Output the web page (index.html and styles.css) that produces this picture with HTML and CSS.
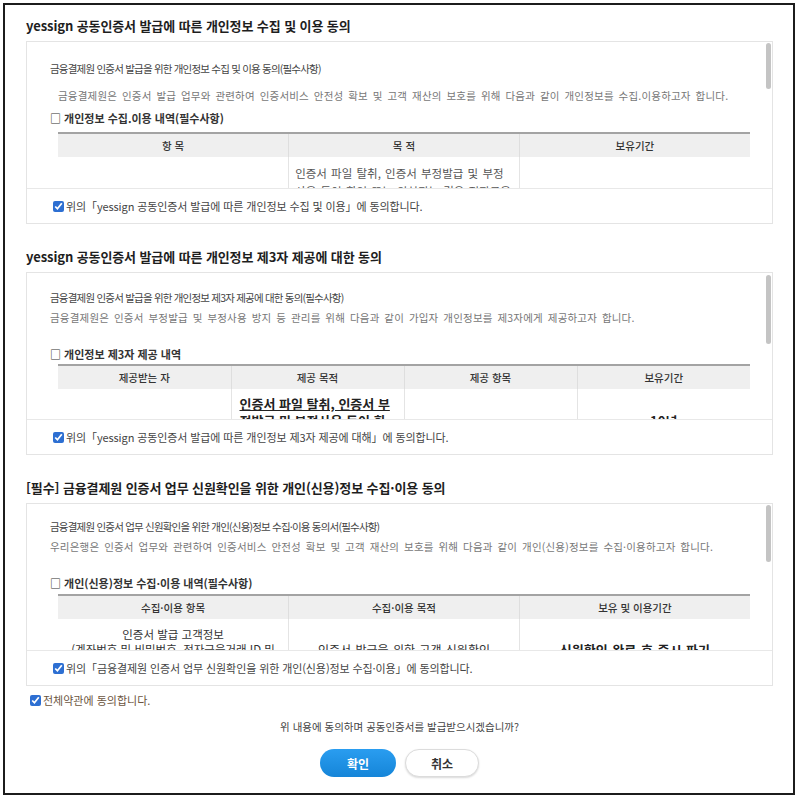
FILE: index.html
```html
<!DOCTYPE html>
<html lang="ko">
<head>
<meta charset="utf-8">
<title>공동인증서 발급 약관 동의</title>
<link rel="stylesheet" href="styles.css">
</head>
<body>
<div class="frame">

  <section class="agree">
    <h2 class="agree-title">yessign 공동인증서 발급에 따른 개인정보 수집 및 이용 동의</h2>
    <div class="agree-box">
      <div class="agree-body">
        <div class="agree-scroll scroll-first">
          <p class="lead">금융결제원 인증서 발급을 위한 개인정보 수집 및 이용 동의(필수사항)</p>
          <p class="desc desc-indent">금융결제원은 인증서 발급 업무와 관련하여 인증서비스 안전성 확보 및 고객 재산의 보호를 위해 다음과 같이 개인정보를 수집.이용하고자 합니다.</p>
          <p class="sub sub-tight">□ 개인정보 수집.이용 내역(필수사항)</p>
          <table class="terms terms-first">
            <thead>
              <tr><th>항 목</th><th>목 적</th><th>보유기간</th></tr>
            </thead>
            <tbody>
              <tr>
                <td class="c-center">성명, 휴대폰번호, 이메일 주소</td>
                <td class="c-plain">인증서 파일 탈취, 인증서 부정발급 및 부정 사용 등이 확인 또는 의심되는 경우 전자금융거래 사고 예방 및 고객 재산 보호를 위하여 해당 인증서의 효력정지 및 폐지 등의 조치를 취하고, 그 사실을 고객에게 안내하기 위한 목적</td>
                <td class="c-center">인증서 효력 소멸일로부터 10년</td>
              </tr>
            </tbody>
          </table>
          <p class="desc note">※ 귀하는 위 개인정보 수집·이용에 대한 동의를 거부할 권리가 있습니다. 다만, 동의를 거부할 경우 인증서 발급이 제한됩니다.</p>
        </div>
        <div class="scrollbar"><div class="thumb thumb-first"></div></div>
      </div>
      <label class="agree-check"><input type="checkbox" checked><span>위의「yessign 공동인증서 발급에 따른 개인정보 수집 및 이용」에 동의합니다.</span></label>
    </div>
  </section>

  <section class="agree">
    <h2 class="agree-title">yessign 공동인증서 발급에 따른 개인정보 제3자 제공에 대한 동의</h2>
    <div class="agree-box">
      <div class="agree-body">
        <div class="agree-scroll scroll-second">
          <p class="lead">금융결제원 인증서 발급을 위한 개인정보 제3자 제공에 대한 동의(필수사항)</p>
          <p class="desc">금융결제원은 인증서 부정발급 및 부정사용 방지 등 관리를 위해 다음과 같이 가입자 개인정보를 제3자에게 제공하고자 합니다.</p>
          <p class="sub sub-wide">□ 개인정보 제3자 제공 내역</p>
          <table class="terms terms-second">
            <thead>
              <tr><th>제공받는 자</th><th>제공 목적</th><th>제공 항목</th><th>보유기간</th></tr>
            </thead>
            <tbody>
              <tr>
                <td class="c-center c-bottom">인증서 발급 기관</td>
                <td class="c-strong">인증서 파일 탈취, 인증서 부정발급 및 부정사용 등이 확인된 경우</td>
                <td class="c-center c-bottom">성명, 인증서 정보</td>
                <td class="c-bold">10년</td>
              </tr>
            </tbody>
          </table>
          <p class="desc note">※ 귀하는 위 개인정보 제3자 제공에 대한 동의를 거부할 권리가 있습니다.</p>
        </div>
        <div class="scrollbar"><div class="thumb thumb-second"></div></div>
      </div>
      <label class="agree-check"><input type="checkbox" checked><span>위의「yessign 공동인증서 발급에 따른 개인정보 제3자 제공에 대해」에 동의합니다.</span></label>
    </div>
  </section>

  <section class="agree">
    <h2 class="agree-title">[필수] 금융결제원 인증서 업무 신원확인을 위한 개인(신용)정보 수집·이용 동의</h2>
    <div class="agree-box">
      <div class="agree-body">
        <div class="agree-scroll scroll-third">
          <p class="lead">금융결제원 인증서 업무 신원확인을 위한 개인(신용)정보 수집·이용 동의서(필수사항)</p>
          <p class="desc">우리은행은 인증서 업무와 관련하여 인증서비스 안전성 확보 및 고객 재산의 보호를 위해 다음과 같이 개인(신용)정보를 수집·이용하고자 합니다.</p>
          <p class="sub sub-wide">□ 개인(신용)정보 수집·이용 내역(필수사항)</p>
          <table class="terms terms-third">
            <thead>
              <tr><th>수집·이용 항목</th><th>수집·이용 목적</th><th>보유 및 이용기간</th></tr>
            </thead>
            <tbody>
              <tr>
                <td class="c-lines">인증서 발급 고객정보<br>(계좌번호 및 비밀번호, 전자금융거래 ID 및<br>비밀번호, 휴대폰번호 등)</td>
                <td class="c-mid">인증서 발급을 위한 고객 신원확인</td>
                <td class="c-bold">신원확인 완료 후 즉시 파기</td>
              </tr>
            </tbody>
          </table>
          <p class="desc note">※ 귀하는 위 개인(신용)정보 수집·이용에 대한 동의를 거부할 권리가 있습니다. 다만, 동의를 거부할 경우 인증서 발급이 제한됩니다.</p>
        </div>
        <div class="scrollbar"><div class="thumb thumb-third"></div></div>
      </div>
      <label class="agree-check"><input type="checkbox" checked><span>위의「금융결제원 인증서 업무 신원확인을 위한 개인(신용)정보 수집·이용」에 동의합니다.</span></label>
    </div>
  </section>

  <label class="all-check"><input type="checkbox" checked><span>전체약관에 동의합니다.</span></label>
  <p class="question">위 내용에 동의하며 공동인증서를 발급받으시겠습니까?</p>
  <div class="actions">
    <button type="button" class="btn btn-primary">확인</button>
    <button type="button" class="btn btn-default">취소</button>
  </div>
</div>
</body>
</html>
```

FILE: styles.css
```css
* {
  box-sizing: border-box;
}

body {
  margin: 0;
  background: #fff;
  font-family: "Noto Sans CJK KR", "Noto Sans", "Liberation Sans", sans-serif;
  color: #333;
}

.frame {
  margin: 3px;
  width: 792px;
  height: 792px;
  border: 2px solid #1c1c1c;
  padding: 10px 20px 0 21px;
  display: flex;
  flex-direction: column;
}

.agree + .agree {
  margin-top: 22px;
}

.agree-title {
  margin: 0 0 4px;
  font-size: 13px;
  font-weight: 700;
  line-height: 22px;
  color: #1e1e1e;
  letter-spacing: -0.1px;
}

.agree-box {
  height: 183px;
  border: 1px solid #e4e4e4;
  display: flex;
  flex-direction: column;
}

.agree-body {
  height: 146px;
  flex: none;
  display: flex;
}

.agree-scroll {
  flex: 1;
  min-width: 0;
  overflow: hidden;
  padding: 16px 13px 0 23px;
}

.scroll-first {
  padding-top: 18px;
}

.scroll-third {
  padding-top: 14px;
}

.scrollbar {
  width: 9px;
  flex: none;
  padding: 1px 1px 0 3px;
}

.thumb {
  width: 5px;
  background: #c4c4c4;
  border-radius: 3px;
}

.thumb-first {
  height: 46px;
}

.thumb-second {
  margin-top: 1px;
  height: 69px;
}

.thumb-third {
  height: 57px;
}

.lead {
  margin: 0;
  font-size: 10.5px;
  line-height: 18px;
  color: #444;
  letter-spacing: -0.8px;
}

.desc {
  margin: 2px 0 0;
  font-size: 10.5px;
  line-height: 18px;
  color: #777;
  letter-spacing: 0.2px;
  word-spacing: 1.7px;
}

.desc-indent {
  margin-top: 9px;
  padding-left: 8px;
}

.note {
  margin-top: 8px;
  padding-left: 8px;
}

.sub {
  margin: 18px 0 0;
  font-size: 11px;
  font-weight: 700;
  line-height: 18px;
  color: #333;
}

.sub-tight {
  margin-top: 4px;
}

.terms {
  width: calc(100% - 8px);
  margin: 2px 0 0 8px;
  border-collapse: collapse;
  table-layout: fixed;
}

.terms-first {
  margin-top: 5px;
}

.terms-second {
  margin-top: 1px;
}

.terms th {
  height: 24px;
  padding: 0;
  background: #efefef;
  border-top: 2px solid #a3a3a3;
  border-left: 1px solid #dedede;
  font-size: 10.5px;
  font-weight: 500;
  color: #333;
  text-align: center;
}

.terms th:first-child,
.terms td:first-child {
  border-left: 0;
}

.terms td {
  padding: 7px 6px;
  border-left: 1px solid #e4e4e4;
  border-bottom: 1px solid #e4e4e4;
  font-size: 11.5px;
  line-height: 18px;
  color: #555;
  vertical-align: middle;
  word-spacing: 1px;
}

.c-center {
  text-align: center;
}

.c-plain {
  text-align: left;
}

.terms td.c-bottom {
  vertical-align: bottom;
  padding-bottom: 2px;
}

.terms td.c-strong {
  padding: 6px 8px;
  font-size: 13px;
  line-height: 17px;
  font-weight: 700;
  color: #222;
  text-decoration: underline;
  word-break: break-all;
  word-spacing: 0;
}

.terms td.c-bold {
  font-size: 13px;
  font-weight: 700;
  color: #222;
  text-align: center;
}

.terms td.c-lines {
  padding: 8px 4px;
  font-size: 11.5px;
  line-height: 15px;
  color: #333;
  text-align: center;
  white-space: nowrap;
  word-spacing: 0;
}

.terms td.c-mid {
  font-size: 12px;
  color: #333;
  text-align: center;
}

.agree-check {
  height: 35px;
  flex: none;
  border-top: 1px solid #e8e8e8;
  display: flex;
  align-items: center;
  gap: 2px;
  padding-left: 26px;
  font-size: 11px;
  color: #444;
  letter-spacing: -0.1px;
}

input[type="checkbox"] {
  width: 11px;
  height: 11px;
  margin: 0;
  accent-color: #2d6fd2;
}

.all-check {
  margin-top: 6px;
  padding-left: 4px;
  display: flex;
  align-items: center;
  gap: 2px;
  font-size: 11px;
  line-height: 16px;
  color: #6b5440;
}

.question {
  margin: 11px 0 0;
  font-size: 10.5px;
  line-height: 16px;
  color: #444;
  text-align: center;
}

.actions {
  margin-top: 14px;
  display: flex;
  justify-content: center;
  gap: 9px;
}

.btn {
  height: 28px;
  border-radius: 14px;
  font-family: inherit;
  font-size: 12px;
  font-weight: 700;
  padding: 0;
  cursor: pointer;
}

.btn-primary {
  width: 76px;
  border: 0;
  background: linear-gradient(#2a9df0, #1585d8);
  color: #fff;
}

.btn-default {
  width: 74px;
  border: 1px solid #dcdcdc;
  background: #fff;
  color: #333;
  box-shadow: 0 1px 2px rgba(0, 0, 0, 0.15);
}
```
